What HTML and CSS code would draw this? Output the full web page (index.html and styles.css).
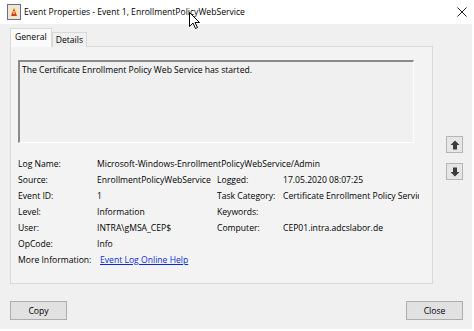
FILE: index.html
```html
<!DOCTYPE html>
<html lang="en">
<head>
  <meta charset="UTF-8">
  <title>Event Properties</title>
  <link rel="stylesheet" href="styles.css">
</head>
<body>
  <div class="window">
    <div class="titlebar">
      <svg class="app-icon" width="14" height="16" viewBox="0 0 14 16">
        <rect x="0.5" y="0.5" width="13" height="15" fill="#e8e4f0" stroke="#6a6a9a"/>
        <rect x="2" y="2" width="10" height="12" fill="#f6e9b8"/>
        <path d="M4 12 L7 4 L10 12 Z" fill="#d04020"/>
        <rect x="6.5" y="7" width="1" height="3" fill="#fff"/>
      </svg>
      <span class="title">Event Properties - Event 1, EnrollmentPolicyWebService</span>
      <span class="close-x">
        <svg width="10" height="10" viewBox="0 0 10 10"><path d="M0.5 0.5 L9.5 9.5 M9.5 0.5 L0.5 9.5" stroke="#222" stroke-width="1"/></svg>
      </span>
    </div>

    <div class="content">
      <div class="main">
        <div class="tabs-area">
          <div class="tab-strip">
            <div class="tab active">General</div>
            <div class="tab">Details</div>
          </div>
          <div class="panel">
            <div class="message">The Certificate Enrollment Policy Web Service has started.</div>
            <div class="details">
              <span class="lbl">Log Name:</span>
              <span class="val wide">Microsoft-Windows-EnrollmentPolicyWebService/Admin</span>

              <span class="lbl">Source:</span>
              <span class="val">EnrollmentPolicyWebService</span>
              <span class="lbl">Logged:</span>
              <span class="val">17.05.2020 08:07:25</span>

              <span class="lbl">Event ID:</span>
              <span class="val">1</span>
              <span class="lbl">Task Category:</span>
              <span class="val">Certificate Enrollment Policy Service</span>

              <span class="lbl">Level:</span>
              <span class="val">Information</span>
              <span class="lbl">Keywords:</span>
              <span class="val"></span>

              <span class="lbl">User:</span>
              <span class="val">INTRA\gMSA_CEP$</span>
              <span class="lbl">Computer:</span>
              <span class="val">CEP01.intra.adcslabor.de</span>

              <span class="lbl">OpCode:</span>
              <span class="val wide">Info</span>

              <span class="lbl">More Information:</span>
              <span class="val wide"><a href="#" class="link">Event Log Online Help</a></span>
            </div>
          </div>
        </div>
        <div class="side">
          <button class="arrow-btn">
            <svg width="10" height="10" viewBox="0 0 10 10"><path d="M5 0.5 L9.5 5 H7 V9.5 H3 V5 H0.5 Z" fill="#3c3c3c"/></svg>
          </button>
          <button class="arrow-btn">
            <svg width="10" height="10" viewBox="0 0 10 10"><path d="M5 9.5 L9.5 5 H7 V0.5 H3 V5 H0.5 Z" fill="#3c3c3c"/></svg>
          </button>
        </div>
      </div>
      <div class="footer">
        <button class="btn">Copy</button>
        <button class="btn">Close</button>
      </div>
    </div>
  </div>

  <svg class="cursor" width="12" height="18" viewBox="0 0 12 18">
    <path d="M0.5 0.5 V14.5 L4 11 L6.5 16.5 L8.5 15.5 L6 10.5 H10.5 Z" fill="#fff" stroke="#000" stroke-width="1"/>
  </svg>
</body>
</html>
```

FILE: styles.css
```css
* {
  box-sizing: border-box;
}
body {
  margin: 0;
  background: #ffffff;
  font-family: "Open Sans", "Noto Sans", sans-serif;
  font-size: 8.6px;
  color: #000;
}
.window {
  width: 472px;
  height: 329px;
  background: #f0f0f0;
  display: flex;
  flex-direction: column;
}
.titlebar {
  height: 24px;
  background: #fff;
  display: flex;
  align-items: center;
  padding-left: 7px;
}
.app-icon {
  margin-right: 3px;
}
.title {
  font-size: 8.6px;
  flex: 1;
}
.close-x {
  width: 20px;
  display: flex;
  justify-content: center;
}
.content {
  flex: 1;
  padding: 4px 9px 0 10px;
  display: flex;
  flex-direction: column;
}
.main {
  display: flex;
}
.tabs-area {
  width: 423px;
}
.tab-strip {
  display: flex;
  height: 18px;
  align-items: flex-end;
}
.tab {
  height: 15px;
  line-height: 14px;
  padding: 0 3px;
  border: 1px solid #d9d9d9;
  border-bottom: none;
  margin-bottom: -1px;
  background: #f0f0f0;
}
.tab.active {
  height: 19px;
  line-height: 16px;
  background: #fbfbfb;
  padding: 0 4px;
  position: relative;
  z-index: 1;
}
.panel {
  height: 238px;
  border: 1px solid #d9d9d9;
  background: #f3f3f3;
  padding: 13px 0 0 7px;
}
.message {
  width: 396px;
  height: 83px;
  border-top: 2px solid #8a8a8a;
  border-left: 2px solid #8a8a8a;
  border-right: 1px solid #ffffff;
  border-bottom: 1px solid #ffffff;
  padding: 1px 2px;
  line-height: 14px;
  background: #f0f0f0;
}
.details {
  margin-top: 13px;
  display: grid;
  grid-template-columns: 79px 120px 66px 136px;
  grid-auto-rows: 16px;
  align-items: center;
  white-space: nowrap;
}
.val {
  overflow: hidden;
  padding-right: 3px;
}
.val.wide {
  grid-column: span 3;
}
.link {
  color: #0b2bd8;
  text-decoration: underline;
  margin-left: 3px;
}
.side {
  flex: 1;
  display: flex;
  flex-direction: column;
  align-items: flex-start;
  padding-top: 108px;
  padding-left: 13px;
  gap: 10px;
}
.arrow-btn {
  width: 17px;
  height: 17px;
  padding: 0;
  border: 1px solid #b5b5b5;
  background: #e6e6e6;
  display: flex;
  align-items: center;
  justify-content: center;
}
.footer {
  display: flex;
  justify-content: space-between;
  margin-top: 17px;
}
.btn {
  width: 57px;
  height: 19px;
  padding: 0;
  border: 1px solid #adadad;
  background: #e1e1e1;
  font-family: "Open Sans", "Noto Sans", sans-serif;
  font-size: 8.6px;
  color: #000;
}
.cursor {
  position: absolute;
  left: 189px;
  top: 12px;
}
```
